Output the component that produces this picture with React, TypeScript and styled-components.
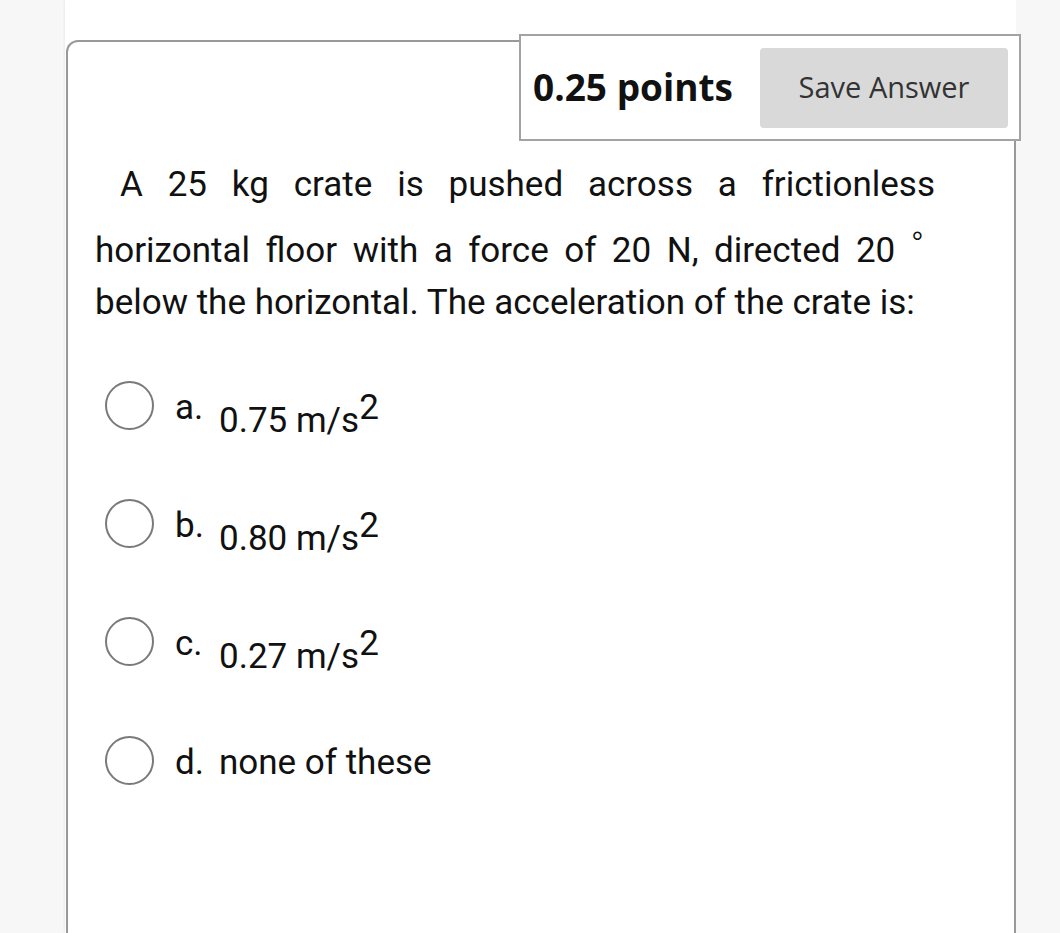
import React from "react";
import styled, { createGlobalStyle } from "styled-components";

const GlobalStyle = createGlobalStyle`
  html, body { margin: 0; padding: 0; }
  body {
    background: #f7f7f7;
    font-family: Roboto, "Liberation Sans", sans-serif;
    overflow: hidden;
  }
`;

const Page = styled.div`
  margin-left: 65px;
  width: 951px;
  height: 933px;
  background: #ffffff;
  padding-top: 40px;
  padding-left: 1px;
  box-sizing: border-box;
  box-shadow: -1px 0 2px rgba(0, 0, 0, 0.05);
`;

const Card = styled.div`
  box-sizing: border-box;
  height: 960px;
  border: 2px solid #999999;
  border-bottom: none;
  border-top-left-radius: 12px;
  display: flex;
  flex-direction: column;
`;

const HeaderRow = styled.div`
  display: flex;
  justify-content: flex-end;
  margin-top: -8px;
  margin-right: -7px;
`;

const PointsBox = styled.div`
  box-sizing: border-box;
  width: 502px;
  height: 107px;
  background: #ffffff;
  border: 2px solid #a3a3a3;
  padding: 11px 11px 11px 12px;
  display: flex;
  align-items: center;
  justify-content: space-between;
`;

const Points = styled.span`
  font-family: "Open Sans", "Noto Sans", sans-serif;
  font-weight: 700;
  font-size: 37px;
  color: #111111;
  padding-bottom: 3px;
`;

const SaveButton = styled.button`
  box-sizing: border-box;
  width: 248px;
  height: 80px;
  border: none;
  border-radius: 4px;
  background: #d9d9d9;
  font-family: "Open Sans", "Noto Sans", sans-serif;
  font-size: 29px;
  color: #333333;
  padding: 0 0 3px;
`;

const Question = styled.p`
  margin: 18px 79px 0 27px;
  font-size: 35px;
  line-height: 52.5px;
  color: #111111;
  text-align: justify;
  text-indent: 25px;
`;

const Degree = styled.sup`
  font-size: inherit;
  font-weight: 300;
  vertical-align: super;
  line-height: inherit;
  position: relative;
  top: 8px;
  margin-right: 11px;
`;

const Sup = styled.sup`
  font-size: inherit;
  vertical-align: super;
  line-height: inherit;
`;

const Options = styled.div`
  margin: 53px 0 0 37px;
  display: flex;
  flex-direction: column;
  gap: 53px;
`;

const OptionRow = styled.label`
  display: flex;
  align-items: flex-start;
  font-size: 35px;
  line-height: 52.5px;
  color: #111111;
`;

const Radio = styled.span`
  box-sizing: border-box;
  flex: none;
  width: 49px;
  height: 49px;
  border: 2.5px solid #7a7a7a;
  border-radius: 50%;
  margin-right: 21px;
  margin-top: -1px;
`;

const Letter = styled.span`
  flex: none;
  width: 44px;
`;

const Answer = styled.span`
  white-space: nowrap;
`;

const options: { letter: string; text: string; unit: boolean }[] = [
  { letter: "a.", text: "0.75 m/s", unit: true },
  { letter: "b.", text: "0.80 m/s", unit: true },
  { letter: "c.", text: "0.27 m/s", unit: true },
  { letter: "d.", text: "none of these", unit: false },
];

export default function App() {
  return (
    <>
      <GlobalStyle />
      <Page>
        <Card>
          <HeaderRow>
            <PointsBox>
              <Points>0.25 points</Points>
              <SaveButton>Save Answer</SaveButton>
            </PointsBox>
          </HeaderRow>
          <Question>
            A 25 kg crate is pushed across a frictionless horizontal floor with a force
            of 20 N, directed 20 <Degree>°</Degree> below the horizontal. The acceleration
            of the crate is:
          </Question>
          <Options>
            {options.map((o) => (
              <OptionRow key={o.letter}>
                <Radio />
                <Letter>{o.letter}</Letter>
                <Answer>
                  {o.text}
                  {o.unit && <Sup>2</Sup>}
                </Answer>
              </OptionRow>
            ))}
          </Options>
        </Card>
      </Page>
    </>
  );
}
